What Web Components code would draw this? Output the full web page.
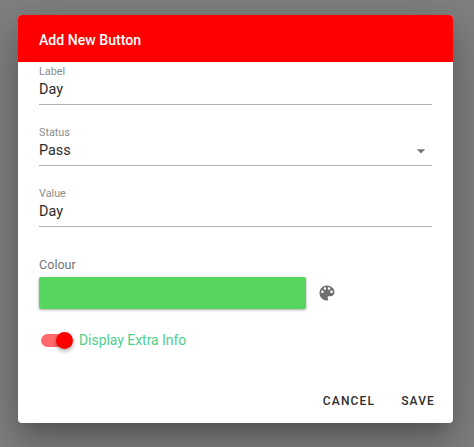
<!DOCTYPE html>
<html lang="en">

<head>
    <meta charset="UTF-8">
    <title>Add New Button</title>
    <style>
        html, body {
            margin: 0;
            height: 100%;
        }

        body {
            background: #808080;
            font-family: Roboto, "Liberation Sans", sans-serif;
            overflow: hidden;
        }
    </style>
</head>

<body>

    <template id="form-dialog-template">
        <style>
            :host {
                box-sizing: border-box;
                width: 435px;
                height: 408px;
                margin: 15px 0 0 18px;
                background: #fff;
                border-radius: 4px;
                box-shadow: 0 11px 15px -7px rgba(0, 0, 0, .2), 0 24px 38px 3px rgba(0, 0, 0, .14), 0 9px 46px 8px rgba(0, 0, 0, .12);
                overflow: hidden;
                display: flex;
                flex-direction: column;
            }

            header {
                height: 47px;
                flex: none;
                background: #ff0000;
                color: #fff;
                font-size: 14.1px;
                font-weight: 500;
                padding: 3px 21px 0;
                display: flex;
                align-items: center;
                box-sizing: border-box;
            }

            #content {
                flex: 1;
                padding: 0 21px;
            }

            footer {
                display: flex;
                justify-content: flex-end;
                gap: 26px;
                padding: 0 18px 12px 0;
            }
        </style>
        <header><slot name="title"></slot></header>
        <div id="content"><slot></slot></div>
        <footer><slot name="actions"></slot></footer>
    </template>

    <template id="text-field-template">
        <style>
            :host {
                display: block;
                padding-bottom: 18px;
            }

            #box {
                height: 42px;
                border-bottom: 1px solid #b0b0b0;
            }

            #label {
                display: block;
                color: #8a8a8a;
                font-size: 10.8px;
                line-height: 12px;
                padding-top: 4px;
            }

            #row {
                display: flex;
                justify-content: space-between;
                align-items: center;
                color: #2b2b2b;
                font-size: 14.4px;
                line-height: 20px;
                padding-top: 2px;
            }

            svg {
                width: 20px;
                height: 20px;
                margin-right: 1px;
                fill: #757575;
            }

            svg[hidden] {
                display: none;
            }
        </style>
        <div id="box">
            <span id="label"></span>
            <div id="row">
                <span id="value"></span>
                <svg viewBox="0 0 24 24" hidden><path d="M7 10l5 5 5-5z"/></svg>
            </div>
        </div>
    </template>

    <template id="colour-field-template">
        <style>
            :host {
                display: block;
                margin-top: 12px;
            }

            #label {
                color: #757575;
                font-size: 12.6px;
                line-height: 15px;
                display: block;
            }

            #row {
                display: flex;
                align-items: center;
                gap: 11px;
                margin-top: 5px;
            }

            #swatch {
                width: 267px;
                height: 32px;
                border-radius: 2px;
                box-shadow: 0 1px 3px rgba(0, 0, 0, .35);
            }

            svg {
                width: 20px;
                height: 20px;
                fill: #6f6f6f;
            }
        </style>
        <span id="label"><slot></slot></span>
        <div id="row">
            <div id="swatch"></div>
            <svg viewBox="0 0 24 24"><path d="M12 3c-4.97 0-9 4.03-9 9s4.03 9 9 9c.83 0 1.5-.67 1.5-1.5 0-.39-.15-.74-.39-1.01-.23-.26-.38-.61-.38-.99 0-.83.67-1.5 1.5-1.5H16c2.76 0 5-2.24 5-5 0-4.42-4.03-8-9-8zm-5.5 9c-.83 0-1.5-.67-1.5-1.5S5.67 9 6.5 9 8 9.67 8 10.5 7.33 12 6.5 12zm3-4C8.67 8 8 7.33 8 6.5S8.67 5 9.5 5s1.5.67 1.5 1.5S10.33 8 9.5 8zm5 0c-.83 0-1.5-.67-1.5-1.5S13.67 5 14.5 5s1.5.67 1.5 1.5S15.33 8 14.5 8zm3 4c-.83 0-1.5-.67-1.5-1.5S16.67 9 17.5 9s1.5.67 1.5 1.5-.67 1.5-1.5 1.5z"/></svg>
        </div>
    </template>

    <template id="switch-field-template">
        <style>
            :host {
                display: flex;
                align-items: center;
                margin-top: 21px;
                color: #4ecf8c;
                font-size: 13.9px;
                line-height: 20px;
            }

            #track {
                width: 22px;
                height: 13px;
                margin-left: 2px;
                border-radius: 7px;
                background: #ff6b6b;
                position: relative;
            }

            #thumb {
                position: absolute;
                right: -10px;
                top: -2px;
                width: 17px;
                height: 17px;
                border-radius: 50%;
                background: #ff0000;
                box-shadow: 0 2px 4px rgba(0, 0, 0, .35);
            }

            #text {
                margin-left: 16px;
            }
        </style>
        <div id="track"><div id="thumb"></div></div>
        <span id="text"><slot></slot></span>
    </template>

    <template id="flat-button-template">
        <style>
            :host {
                display: block;
                color: #2e2e2e;
                font-size: 12px;
                font-weight: 500;
                letter-spacing: 1.15px;
                line-height: 20px;
            }
        </style>
        <slot></slot>
    </template>

    <script>
        // cria o shadow root a partir do template
        function fromTemplate(el, id) {
            const shadowRoot = el.attachShadow({ mode: 'open' });
            shadowRoot.appendChild(document.getElementById(id).content.cloneNode(true));
            return shadowRoot;
        }

        class FormDialog extends HTMLElement {
            constructor() {
                super();
                fromTemplate(this, 'form-dialog-template');
            }
        }

        class TextField extends HTMLElement {
            constructor() {
                super();
                this.root = fromTemplate(this, 'text-field-template');
            }

            connectedCallback() {
                this.root.getElementById('label').textContent = this.getAttribute('label');
                this.root.getElementById('value').textContent = this.getAttribute('value');
                if (this.hasAttribute('select')) {
                    this.root.querySelector('svg').removeAttribute('hidden');
                }
            }
        }

        class ColourField extends HTMLElement {
            constructor() {
                super();
                this.root = fromTemplate(this, 'colour-field-template');
            }

            connectedCallback() {
                this.root.getElementById('swatch').style.background = this.getAttribute('colour');
            }
        }

        class SwitchField extends HTMLElement {
            constructor() {
                super();
                fromTemplate(this, 'switch-field-template');
            }
        }

        class FlatButton extends HTMLElement {
            constructor() {
                super();
                fromTemplate(this, 'flat-button-template');
            }
        }

        customElements.define('form-dialog', FormDialog);
        customElements.define('text-field', TextField);
        customElements.define('colour-field', ColourField);
        customElements.define('switch-field', SwitchField);
        customElements.define('flat-button', FlatButton);
    </script>

    <form-dialog>
        <span slot="title">Add New Button</span>
        <text-field label="Label" value="Day"></text-field>
        <text-field label="Status" value="Pass" select></text-field>
        <text-field label="Value" value="Day"></text-field>
        <colour-field colour="#56d65f">Colour</colour-field>
        <switch-field>Display Extra Info</switch-field>
        <flat-button slot="actions">CANCEL</flat-button>
        <flat-button slot="actions">SAVE</flat-button>
    </form-dialog>
</body>

</html>
